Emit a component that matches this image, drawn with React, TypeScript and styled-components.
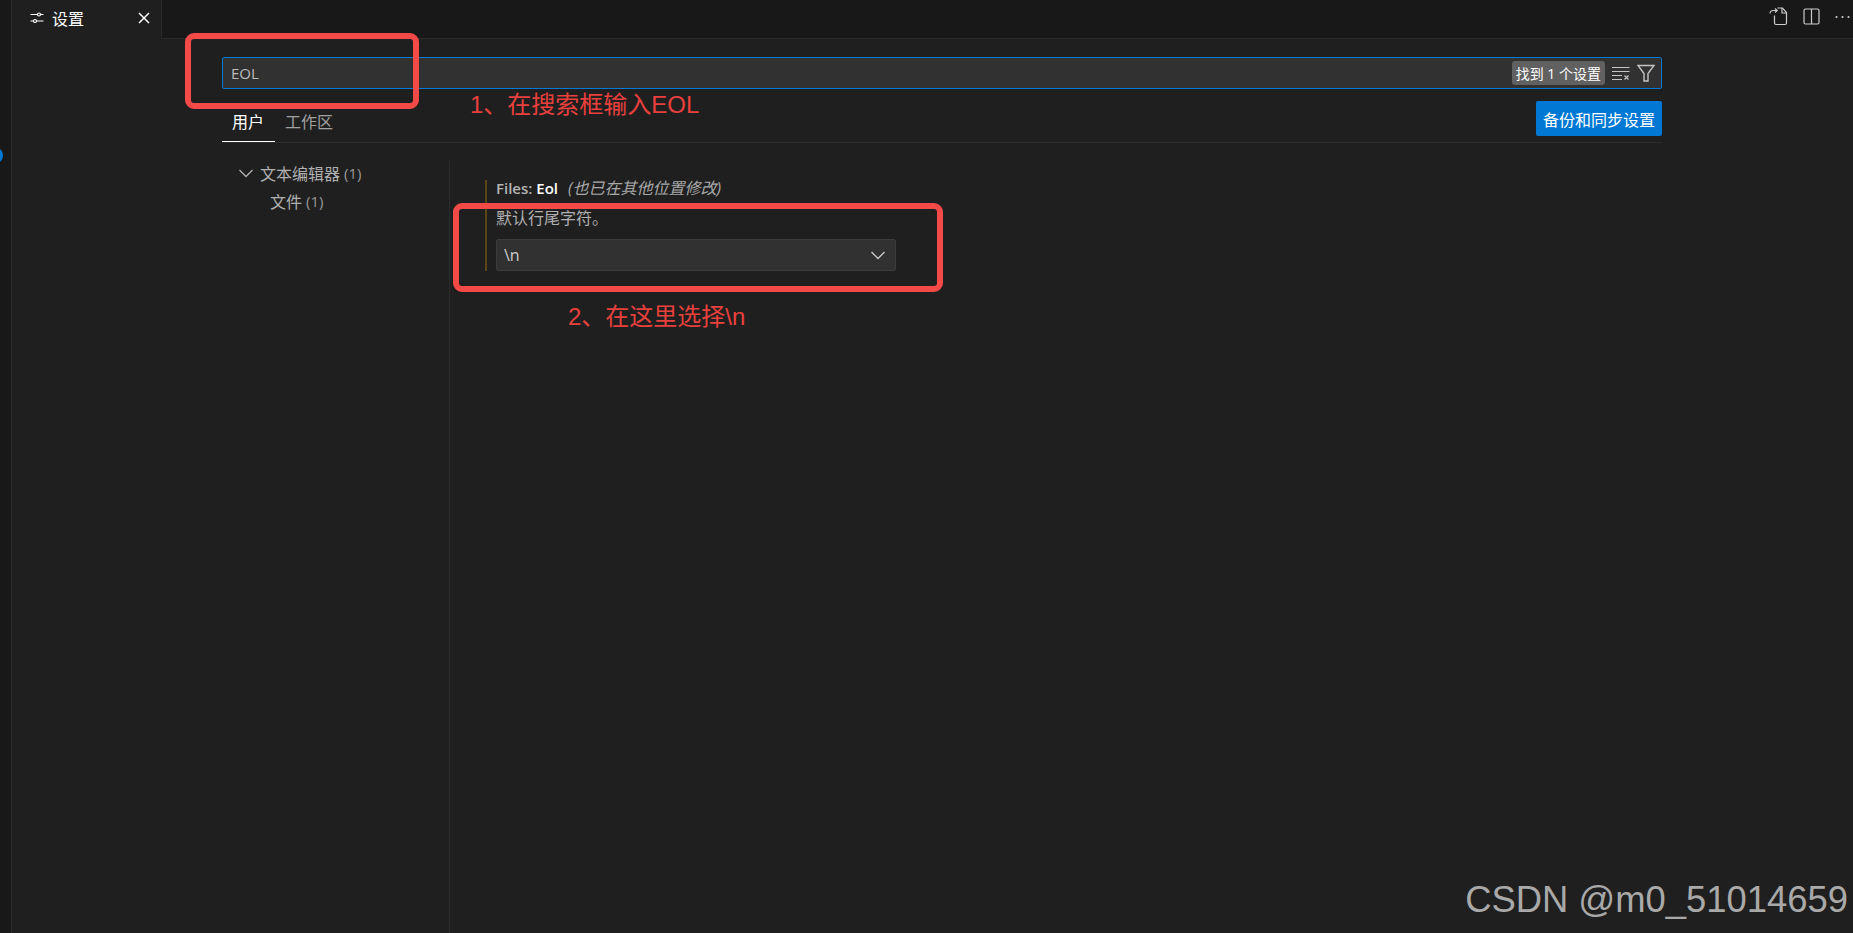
import React from 'react'
import styled, { createGlobalStyle } from 'styled-components'

const UI_FONT = '"Open Sans", "Noto Sans CJK SC", sans-serif'

const GlobalStyle = createGlobalStyle`
  html, body {
    margin: 0;
    height: 100%;
    background: #1f1f1f;
    overflow: hidden;
  }
  body {
    font-family: ${UI_FONT};
    font-size: 16px;
    color: #cccccc;
  }
`

const Shell = styled.div`
  position: relative;
  display: flex;
  width: 1853px;
  height: 933px;
  overflow: hidden;
`

const ActivityBar = styled.div`
  position: relative;
  flex: 0 0 11px;
  background: #181818;
  border-right: 1px solid #2b2b2b;
`

const ActivityBadge = styled.span`
  position: absolute;
  left: -6px;
  top: 149px;
  width: 9px;
  height: 13px;
  border-radius: 50%;
  background: #0078d4;
`

const Main = styled.div`
  flex: 1;
  display: flex;
  flex-direction: column;
  min-width: 0;
`

const TabBar = styled.div`
  flex: 0 0 39px;
  min-height: 0;
  box-sizing: border-box;
  display: flex;
  align-items: flex-start;
  justify-content: space-between;
  background: #181818;
  border-bottom: 1px solid #2b2b2b;
`

const Tab = styled.div`
  width: 150px;
  height: 39px;
  box-sizing: border-box;
  display: flex;
  align-items: center;
  padding: 0 10px 4px 18px;
  background: #1f1f1f;
  border-right: 1px solid #2b2b2b;
  color: #ffffff;
`

const TabTitle = styled.span`
  margin-left: 8px;
  flex: 1;
  font-size: 16px;
`

const Actions = styled.div`
  height: 38px;
  display: flex;
  align-items: center;
  gap: 14px;
  padding: 0 0 6px;
  box-sizing: border-box;
  margin-right: 2px;
  color: #cccccc;
`

const Settings = styled.div`
  flex: 1;
  min-height: 0;
  display: flex;
  flex-direction: column;
  width: 1440px;
  margin-left: 210px;
  padding-top: 18px;
`

const SearchBox = styled.div`
  flex: 0 0 32px;
  box-sizing: border-box;
  display: flex;
  align-items: center;
  padding: 0 6px 0 8px;
  background: #313131;
  border: 1px solid #0078d4;
  border-radius: 2px;
  font-size: 15px;
  color: #bbbbbb;
`

const SearchText = styled.span`
  flex: 1;
`

const CountBadge = styled.span`
  height: 24px;
  padding: 0 4px;
  display: flex;
  align-items: center;
  margin-right: 7px;
  border-radius: 3px;
  background: #616161;
  color: #ffffff;
  font-size: 14px;
  white-space: nowrap;
`

const SearchIcons = styled.div`
  display: flex;
  align-items: center;
  gap: 7px;
  color: #c5c5c5;
`

const Header = styled.div`
  flex: 0 0 53px;
  box-sizing: border-box;
  display: flex;
  justify-content: space-between;
  align-items: flex-start;
  border-bottom: 1px solid #2b2b2b;
`

const TabList = styled.div`
  display: flex;
  padding-top: 21px;
`

const ScopeTab = styled.div<{ $active?: boolean }>`
  height: 32px;
  box-sizing: border-box;
  padding: 0 11px 0 10px;
  line-height: 24px;
  font-size: 16px;
  color: ${({ $active }) => ($active ? '#ffffff' : '#a0a0a0')};
  border-bottom: 1px solid ${({ $active }) => ($active ? '#ffffff' : 'transparent')};
`

const SyncButton = styled.button`
  width: 126px;
  height: 35px;
  margin-top: 12px;
  padding: 0;
  border: none;
  border-radius: 2px;
  background: #0078d4;
  color: #ffffff;
  font-family: ${UI_FONT};
  font-size: 16px;
`

const Body = styled.div`
  flex: 1;
  min-height: 0;
  display: flex;
  padding-top: 16px;
`

const Tree = styled.div`
  flex: 0 0 227px;
`

const TreeRow = styled.div<{ $indent: number }>`
  height: 28px;
  display: flex;
  align-items: center;
  padding-left: ${({ $indent }) => $indent}px;
  font-size: 16px;
  color: #b0b0b0;
`

const TreeLabel = styled.span`
  margin-left: 6px;
`

const TreeCount = styled.span`
  margin-left: 4px;
  font-size: 15px;
  color: #989898;
`

const Content = styled.div`
  flex: 1;
  margin-top: 2px;
  border-left: 1px solid #2b2b2b;
  padding: 19px 0 0 35px;
`

const SettingItem = styled.div`
  width: 411px;
  box-sizing: border-box;
  padding-left: 9px;
  border-left: 2px solid #5a4514;
`

const SettingTitle = styled.div`
  height: 18px;
  line-height: 16px;
  font-size: 15px;
  font-weight: 600;
  color: #b4b4b4;
  white-space: nowrap;
`

const SettingName = styled.span`
  color: #ffffff;
`

const SettingNote = styled.span`
  margin-left: 10px;
  font-size: 16px;
  font-weight: 400;
  font-style: italic;
  color: #a8a8a8;
`

const SettingDescription = styled.div`
  margin-top: 9px;
  height: 22px;
  line-height: 22px;
  font-size: 16px;
  color: #b0b0b0;
`

const Select = styled.div`
  margin-top: 10px;
  width: 400px;
  height: 32px;
  box-sizing: border-box;
  display: flex;
  align-items: center;
  justify-content: space-between;
  padding: 0 9px 0 7px;
  background: #313131;
  border: 1px solid #3c3c3c;
  border-radius: 2px;
  font-size: 16px;
  color: #cccccc;
`

const Highlight = styled.div<{ $x: number; $y: number; $w: number; $h: number }>`
  position: absolute;
  left: ${({ $x }) => $x}px;
  top: ${({ $y }) => $y}px;
  width: ${({ $w }) => $w}px;
  height: ${({ $h }) => $h}px;
  box-sizing: border-box;
  border: 6px solid #f44a47;
  border-radius: 9px;
`

const Note = styled.div<{ $x: number; $y: number }>`
  position: absolute;
  left: ${({ $x }) => $x}px;
  top: ${({ $y }) => $y}px;
  font-family: "Liberation Sans", "Noto Sans CJK SC", sans-serif;
  font-size: 24px;
  line-height: 28px;
  color: #e8403d;
  white-space: nowrap;
`

const Watermark = styled.div`
  position: absolute;
  right: 5px;
  top: 879px;
  font-family: "Liberation Sans", sans-serif;
  font-size: 36.4px;
  line-height: 42px;
  color: #a9a9a9;
  white-space: nowrap;
`

const Icon = styled.svg<{ $weight?: number; $solid?: boolean }>`
  display: block;
  flex: none;
  fill: ${({ $solid }) => ($solid ? 'currentColor' : 'none')};
  stroke: ${({ $solid }) => ($solid ? 'none' : 'currentColor')};
  stroke-width: ${({ $weight }) => $weight ?? 1.2};
`

const SlidersIcon = () => (
  <Icon width="14" height="14" viewBox="0 0 14 14">
    <path d="M0.5 3.5h7M10.5 3.5h3M0.5 10h3M6.5 10h7" />
    <circle cx="9" cy="3.5" r="1.5" />
    <circle cx="5" cy="10" r="1.5" />
  </Icon>
)

const CloseIcon = () => (
  <Icon width="14" height="14" viewBox="0 0 14 14" $weight={1.5}>
    <path d="M2 2l10 10M12 2L2 12" />
  </Icon>
)

const OpenJsonIcon = () => (
  <Icon width="20" height="20" viewBox="0 0 20 20">
    <path d="M5.5 9.5V17a1.5 1.5 0 0 0 1.5 1.5h9a1.5 1.5 0 0 0 1.5-1.5V6.5L13.5 2H8.5" />
    <path d="M13 2v5h4.5" />
    <path d="M1 7.5a3 3 0 0 1 3-3h4M6 2.5l2.2 2L6 6.5" />
  </Icon>
)

const SplitIcon = () => (
  <Icon width="17" height="17" viewBox="0 0 17 17">
    <rect x="1" y="1" width="15" height="15" rx="1.5" />
    <path d="M8.5 1v15" />
  </Icon>
)

const EllipsisIcon = () => (
  <Icon width="17" height="17" viewBox="0 0 17 17" $solid>
    <circle cx="2.5" cy="9" r="1.1" />
    <circle cx="8.5" cy="9" r="1.1" />
    <circle cx="14.5" cy="9" r="1.1" />
  </Icon>
)

const ClearIcon = () => (
  <Icon width="18" height="16" viewBox="0 0 18 16">
    <path d="M0 2.5h17.5M0 6.5h17.5M0 10.5h10M0 14.5h10" />
    <path d="M12.5 10.5l4 4M16.5 10.5l-4 4" />
  </Icon>
)

const FilterIcon = () => (
  <Icon width="18" height="18" viewBox="0 0 18 18" $weight={1.4}>
    <path d="M1 1.5h16L11 9.5v7.5H7V9.5z" />
  </Icon>
)

const ChevronIcon = () => (
  <Icon width="16" height="16" viewBox="0 0 16 16" $weight={1.3}>
    <path d="M1.5 5L8 11.5 14.5 5" />
  </Icon>
)

export default function App() {
  return (
    <>
      <GlobalStyle />
      <Shell>
        <ActivityBar>
          <ActivityBadge />
        </ActivityBar>
        <Main>
          <TabBar>
            <Tab>
              <SlidersIcon />
              <TabTitle>设置</TabTitle>
              <CloseIcon />
            </Tab>
            <Actions>
              <OpenJsonIcon />
              <SplitIcon />
              <EllipsisIcon />
            </Actions>
          </TabBar>
          <Settings>
            <SearchBox>
              <SearchText>EOL</SearchText>
              <CountBadge>找到 1 个设置</CountBadge>
              <SearchIcons>
                <ClearIcon />
                <FilterIcon />
              </SearchIcons>
            </SearchBox>
            <Header>
              <TabList>
                <ScopeTab $active>用户</ScopeTab>
                <ScopeTab>工作区</ScopeTab>
              </TabList>
              <SyncButton>备份和同步设置</SyncButton>
            </Header>
            <Body>
              <Tree>
                <TreeRow $indent={16}>
                  <ChevronIcon />
                  <TreeLabel>文本编辑器</TreeLabel>
                  <TreeCount>(1)</TreeCount>
                </TreeRow>
                <TreeRow $indent={48}>
                  文件
                  <TreeCount>(1)</TreeCount>
                </TreeRow>
              </Tree>
              <Content>
                <SettingItem>
                  <SettingTitle>
                    Files: <SettingName>Eol</SettingName>
                    <SettingNote>(也已在其他位置修改)</SettingNote>
                  </SettingTitle>
                  <SettingDescription>默认行尾字符。</SettingDescription>
                  <Select>
                    \n
                    <ChevronIcon />
                  </Select>
                </SettingItem>
              </Content>
            </Body>
          </Settings>
        </Main>
        <Highlight $x={185} $y={33} $w={234} $h={76} />
        <Highlight $x={453} $y={203} $w={490} $h={89} />
        <Note $x={470} $y={91}>1、在搜索框输入EOL</Note>
        <Note $x={568} $y={303}>2、在这里选择\n</Note>
        <Watermark>CSDN @m0_51014659</Watermark>
      </Shell>
    </>
  )
}
